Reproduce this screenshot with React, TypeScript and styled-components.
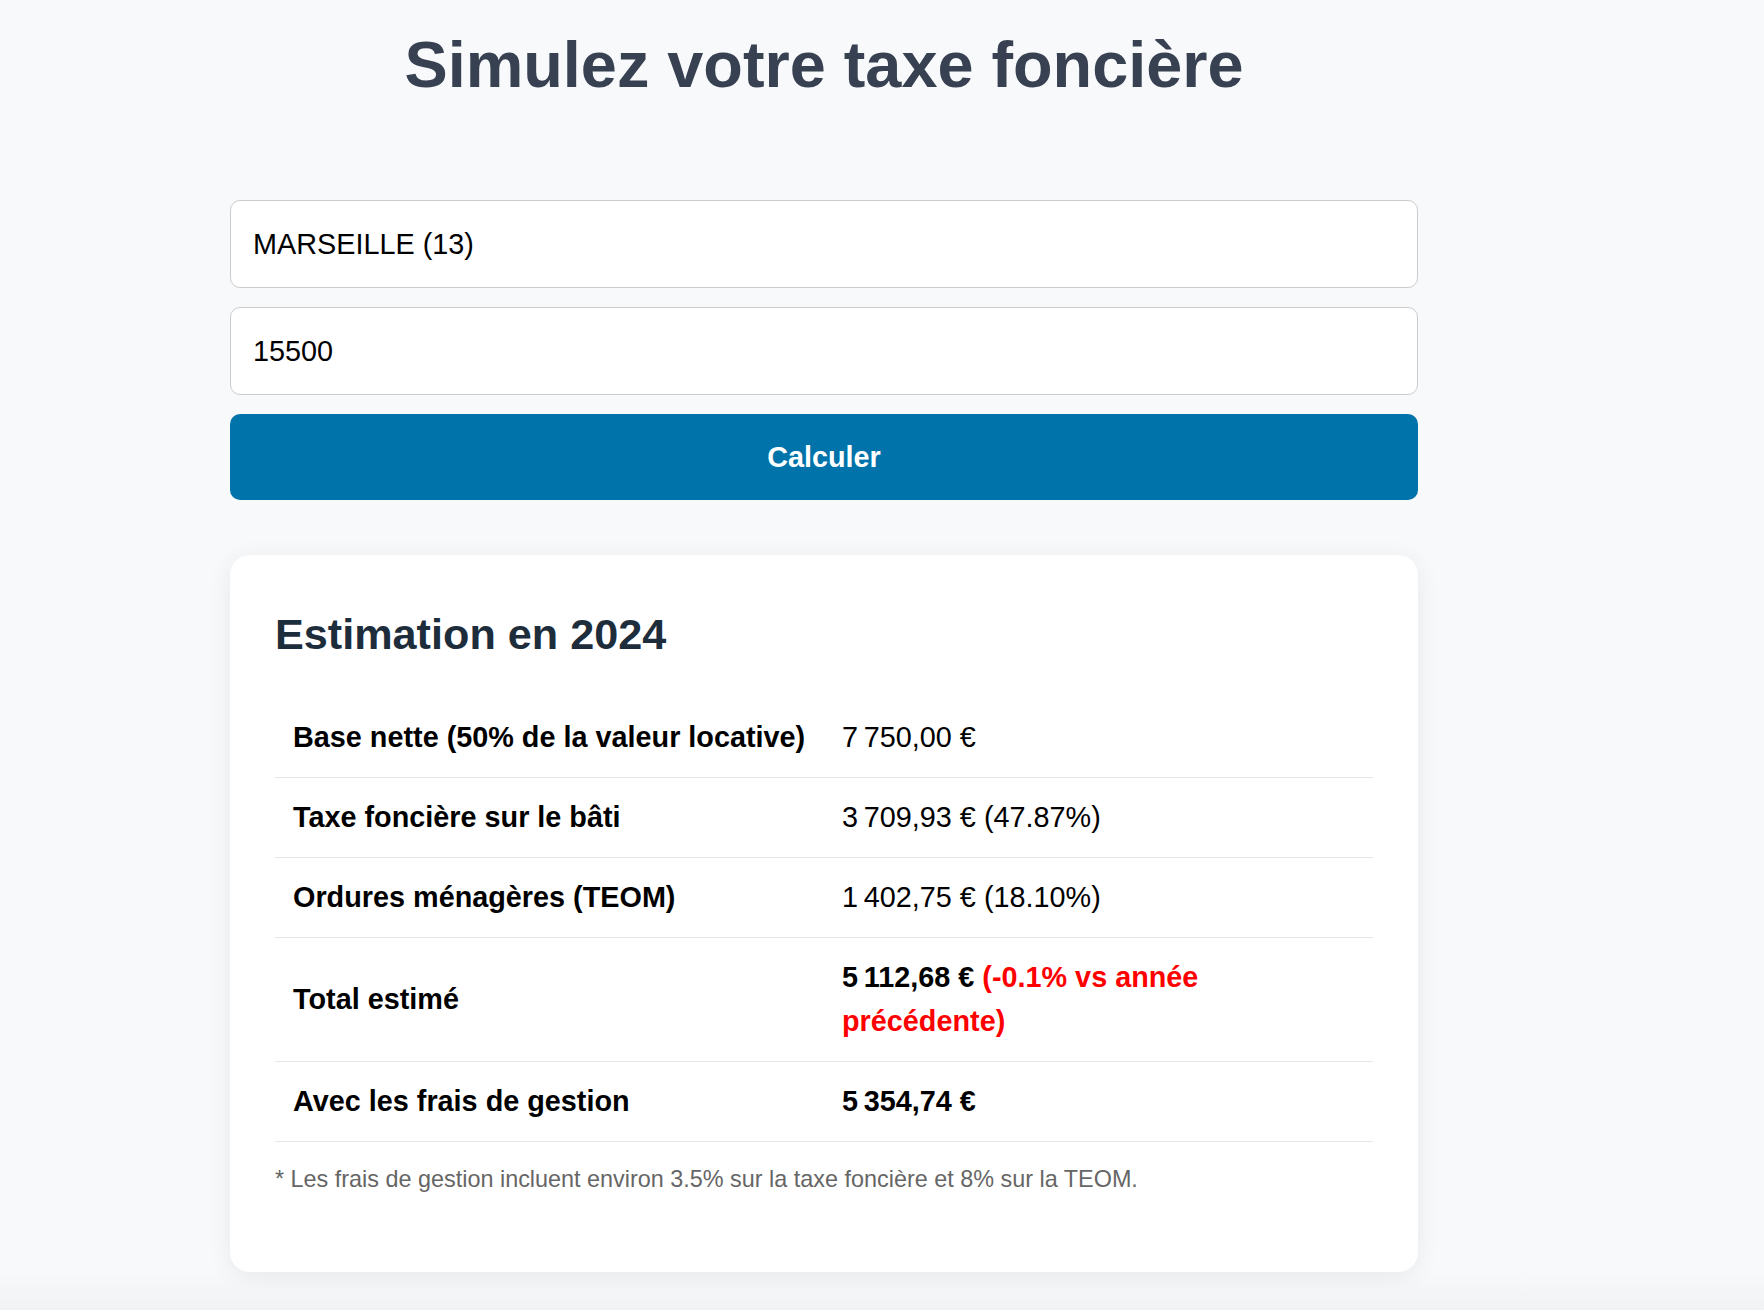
import React from 'react'
import styled, { createGlobalStyle } from 'styled-components'

const GlobalStyle = createGlobalStyle`
    html {
        background: linear-gradient(to bottom, #f8f9fb calc(100% - 40px), #f1f2f4 100%);
        min-height: 100%;
    }
    body {
        margin: 0;
        font-family: 'Liberation Sans', Arial, Helvetica, sans-serif;
        font-size: 28.8px;
        color: #000;
    }
    * {
        box-sizing: border-box;
    }
`

const rows = [
    { label: 'Base nette (50% de la valeur locative)', value: '7\u202f750,00 €' },
    { label: 'Taxe foncière sur le bâti', value: '3\u202f709,93 € (47.87%)' },
    { label: 'Ordures ménagères (TEOM)', value: '1\u202f402,75 € (18.10%)' },
]

export default function App(): JSX.Element {
    return (
        <>
            <GlobalStyle />
            <Page>
                <Column>
                    <Title>Simulez votre taxe foncière</Title>
                    <Form onSubmit={(e) => e.preventDefault()}>
                        <Field type="text" defaultValue="MARSEILLE (13)" />
                        <Field type="text" defaultValue="15500" />
                        <SubmitButton type="submit">Calculer</SubmitButton>
                    </Form>
                    <ResultCard>
                        <CardTitle>Estimation en 2024</CardTitle>
                        <ResultTable>
                            <tbody>
                                {rows.map((row) => (
                                    <tr key={row.label}>
                                        <LabelCell>{row.label}</LabelCell>
                                        <ValueCell>{row.value}</ValueCell>
                                    </tr>
                                ))}
                                <tr>
                                    <LabelCell>Total estimé</LabelCell>
                                    <ValueCell $strong>
                                        5{'\u202f'}112,68 € <Variation>(-0.1% vs année précédente)</Variation>
                                    </ValueCell>
                                </tr>
                                <tr>
                                    <LabelCell>Avec les frais de gestion</LabelCell>
                                    <ValueCell $strong>5{'\u202f'}354,74 €</ValueCell>
                                </tr>
                            </tbody>
                        </ResultTable>
                        <Footnote>
                            * Les frais de gestion incluent environ 3.5% sur la taxe foncière et 8% sur la TEOM.
                        </Footnote>
                    </ResultCard>
                </Column>
            </Page>
        </>
    )
}

const Page = styled.main`
    padding: 27px 0 17px 230px;
`

const Column = styled.div`
    width: 1188px;
    display: flex;
    flex-direction: column;
`

const Title = styled.h1`
    margin: 0 0 98px;
    text-align: center;
    font-size: 64.8px;
    font-weight: 700;
    color: #374151;
`

const Form = styled.form`
    display: flex;
    flex-direction: column;
    gap: 19px;
`

const Field = styled.input`
    height: 88px;
    width: 100%;
    padding: 0 22px;
    border: 1px solid #cccccc;
    border-radius: 10px;
    background: #fff;
    font-family: inherit;
    font-size: 28.8px;
    color: #000;
    outline: none;
`

const SubmitButton = styled.button`
    height: 86px;
    width: 100%;
    border: none;
    border-radius: 10px;
    background: #0073aa;
    color: #fff;
    font-family: inherit;
    font-size: 28.8px;
    font-weight: 700;
    cursor: pointer;
`

const ResultCard = styled.section`
    margin-top: 55px;
    padding: 47px 45px 45px;
    background: #fff;
    border-radius: 20px;
    box-shadow: 0 4px 24px rgba(0, 0, 0, 0.07);
`

const CardTitle = styled.h2`
    margin: 0 0 31px;
    font-size: 43.2px;
    line-height: 1.5;
    font-weight: 700;
    color: #1e2d3b;
`

const ResultTable = styled.table`
    width: 100%;
    border-collapse: collapse;
    table-layout: fixed;
`

const LabelCell = styled.td`
    width: 50%;
    padding: 18px;
    line-height: 1.5;
    font-weight: 700;
    border-bottom: 1px solid #e8e8e8;
    vertical-align: middle;
`

const ValueCell = styled.td<{ $strong?: boolean }>`
    width: 50%;
    padding: 18px;
    line-height: 1.5;
    font-weight: ${(p) => (p.$strong ? 700 : 400)};
    border-bottom: 1px solid #e8e8e8;
    vertical-align: middle;
`

const Variation = styled.span`
    color: #ff0000;
`

const Footnote = styled.p`
    margin: 20px 0 30px;
    font-size: 23.4px;
    line-height: 1.5;
    color: #666666;
`
